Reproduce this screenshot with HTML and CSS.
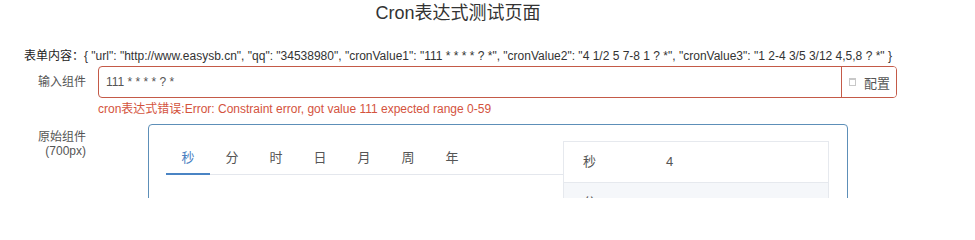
FILE: index.html
```html
<!DOCTYPE html>
<html lang="zh-CN">
<head>
<meta charset="utf-8">
<title>Cron表达式测试页面</title>
<link rel="stylesheet" href="styles.css">
</head>
<body>
<div class="page">
  <h1 class="title">Cron表达式测试页面</h1>
  <div class="form-content"><span class="fc-label">表单内容：</span>{ "url": "http://www.easysb.cn", "qq": "34538980", "cronValue1": "111 * * * * ? *", "cronValue2": "4 1/2 5 7-8 1 ? *", "cronValue3": "1 2-4 3/5 3/12 4,5,8 ? *" }</div>

  <div class="row row-input">
    <div class="label">输入组件</div>
    <div class="field">
      <div class="input-group">
        <div class="input-text">111 * * * * ? *</div>
        <div class="addon"><span class="addon-icon"></span>配置</div>
      </div>
      <div class="error">cron表达式错误:Error: Constraint error, got value 111 expected range 0-59</div>
    </div>
  </div>

  <div class="row row-raw">
    <div class="label label-raw">原始组件<br>(700px)</div>
    <div class="cron-box">
      <div class="tabs-pane">
        <div class="tabs-nav">
          <div class="tab active">秒</div>
          <div class="tab">分</div>
          <div class="tab">时</div>
          <div class="tab">日</div>
          <div class="tab">月</div>
          <div class="tab">周</div>
          <div class="tab">年</div>
        </div>
      </div>
      <div class="result-table">
        <div class="tr"><div class="td td-name">秒</div><div class="td">4</div></div>
        <div class="tr tr-alt"><div class="td td-name">分</div><div class="td">1/2</div></div>
      </div>
    </div>
  </div>
</div>
</body>
</html>
```

FILE: styles.css
```css
html, body {
  margin: 0;
  padding: 0;
  background: #fff;
}
body {
  font-family: "Liberation Sans", Arial, "Noto Sans CJK SC", sans-serif;
  color: #333;
}
.page {
  width: 916px;
  height: 198px;
  overflow: hidden;
}
.title {
  margin: 0;
  font-size: 18px;
  font-weight: normal;
  line-height: 26px;
  text-align: center;
  color: #333;
}
.form-content {
  margin-top: 22px;
  padding-left: 24px;
  font-size: 12px;
  line-height: 16px;
  color: #333;
  white-space: nowrap;
}
.fc-label {
  color: #222;
}
.row {
  display: flex;
  align-items: flex-start;
}
.row-input {
  margin-top: 2px;
}
.label {
  width: 86px;
  flex: none;
  text-align: right;
  font-size: 12px;
  color: #555;
}
.row-input .label {
  line-height: 32px;
}
.field {
  margin-left: 12px;
  width: 799px;
}
.input-group {
  display: flex;
  height: 32px;
  box-sizing: border-box;
  border: 1px solid #c45a48;
  border-radius: 4px;
  overflow: hidden;
}
.input-text {
  flex: 1;
  padding-left: 7px;
  font-size: 12px;
  line-height: 30px;
  color: #555;
}
.addon {
  width: 55px;
  box-sizing: border-box;
  border-left: 1px solid #c45a48;
  display: flex;
  align-items: center;
  padding-left: 7px;
  font-size: 13px;
  color: #555;
  background: #fff;
}
.addon-icon {
  width: 7px;
  height: 8px;
  border: 1px solid #c8c8c8;
  border-top-width: 2px;
  margin-right: 8px;
  box-sizing: border-box;
}
.error {
  margin-top: 3px;
  font-size: 12px;
  line-height: 16px;
  color: #d4533d;
  white-space: nowrap;
}
.row-raw {
  margin-top: 7px;
}
.label-raw {
  padding-top: 6px;
  line-height: 14px;
}
.cron-box {
  margin-left: 62px;
  width: 700px;
  height: 200px;
  box-sizing: border-box;
  border: 1px solid #5d8fb8;
  border-radius: 4px;
  padding: 16px 18px 0 17px;
  display: flex;
}
.tabs-pane {
  flex: 1;
}
.tabs-nav {
  display: flex;
  border-bottom: 1px solid #e4e7ed;
}
.tab {
  width: 44px;
  height: 32px;
  line-height: 34px;
  text-align: center;
  font-size: 13px;
  color: #555;
  border-bottom: 2px solid transparent;
  margin-bottom: -1px;
}
.tab.active {
  color: #4a7fc1;
  border-bottom-color: #4a84c4;
}
.result-table {
  width: 266px;
  flex: none;
  border: 1px solid #e6e9ee;
  box-sizing: border-box;
}
.tr {
  display: flex;
  height: 40px;
  border-bottom: 1px solid #e6e9ee;
  font-size: 13px;
  line-height: 40px;
  color: #555;
}
.tr-alt {
  background: #f5f7fa;
}
.td-name {
  width: 83px;
  padding-left: 19px;
}
```
